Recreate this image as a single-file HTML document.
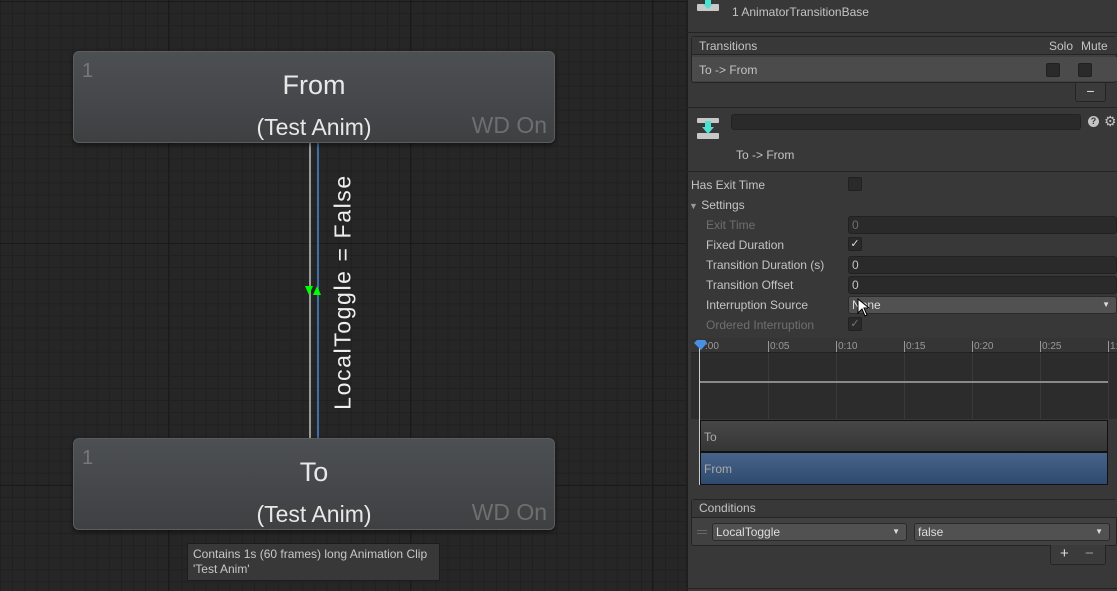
<!DOCTYPE html>
<html><head><style>
*{margin:0;padding:0;box-sizing:border-box}
body{width:1117px;height:591px;overflow:hidden;position:relative;font-family:"Liberation Sans",sans-serif;background:#383838}
.a{position:absolute}
#g{left:0;top:0;width:686px;height:591px;background-color:#262626;
background-image:linear-gradient(#1a1a1a 1px,transparent 1px),linear-gradient(90deg,#1a1a1a 1px,transparent 1px),linear-gradient(#202020 1px,transparent 1px),linear-gradient(90deg,#202020 1px,transparent 1px);
background-size:242px 242px,242px 242px,12.1px 12.1px,12.1px 12.1px;background-position:0 1px,168px 0,0 1px,0 0}
.node{left:73px;width:482px;height:92px;border-radius:6px;background:linear-gradient(#4d5053,#3e4042);border:1px solid #5a5c5e;box-shadow:0 2px 4px rgba(0,0,0,.5);color:#e8e8e8}
.node .n{position:absolute;left:8px;top:8px;font-size:20px;color:#777}
.node .t{position:absolute;left:0;width:100%;text-align:center;font-size:27px}
.node .s{position:absolute;left:0;width:100%;text-align:center;font-size:23px;top:62px}
.node .w{position:absolute;right:7px;top:60px;font-size:23px;color:#6e6e6e}
.lbl{color:#c4c4c4;font-size:12px}
.dis{color:#6f6f6f}
.fld{background:#2a2a2a;border:1px solid #212121;border-radius:3px;height:18px;color:#c4c4c4;font-size:12px;padding-left:3px;line-height:16px}
.cb{width:14px;height:14px;background:#2a2a2a;border:1px solid #212121;border-radius:2px;color:#ddd;font-size:11px;line-height:12px;text-align:center}
.sep{left:686px;width:431px;height:1px;background:#232323}
</style></head><body>
<div id="g" class="a"></div>
<div class="a" style="left:309px;top:140px;width:2px;height:300px;background:#9a9a9a"></div>
<div class="a" style="left:317px;top:140px;width:2px;height:300px;background:#3d6ea6"></div>
<svg class="a" style="left:303px;top:284px" width="22" height="14"><polygon points="2,2 10,2 6,11" fill="#0f0"/><polygon points="10,11 18,11 14,2" fill="#0f0"/></svg>
<div class="a" style="left:343px;top:292px;width:0;height:0"><div style="position:absolute;transform:translate(-50%,-50%) rotate(-90deg);white-space:nowrap;color:#eee;font-size:23px;letter-spacing:1.6px">LocalToggle = False</div></div>
<div class="a node" style="top:51px"><span class="n">1</span><div class="t" style="top:18px">From</div><div class="s">(Test Anim)</div><span class="w">WD On</span></div>
<div class="a node" style="top:438px"><span class="n">1</span><div class="t" style="top:18px">To</div><div class="s">(Test Anim)</div><span class="w">WD On</span></div>
<div class="a" style="left:187px;top:543px;width:253px;height:38px;background:#383838;border:1px solid #1d1d1d;color:#c8c8c8;font-size:12px;padding:3px 5px;line-height:15px">Contains 1s (60 frames) long Animation Clip<br>'Test Anim'</div>

<div class="a" style="left:686px;top:0;width:2px;height:591px;background:#1e1e1e"></div>
<svg class="a" style="left:697px;top:0" width="24" height="14"><rect x="0" y="4" width="22" height="7" rx="1" fill="#c8c8c8"/><rect x="8" y="0" width="6" height="5" fill="#4fe0d0"/><polygon points="6,4 16,4 11,9" fill="#4fe0d0"/></svg>
<div class="a lbl" style="left:732px;top:5px">1 AnimatorTransitionBase</div>
<div class="a sep" style="top:32px"></div>
<div class="a" style="left:691px;top:36px;width:426px;height:47px;border:1px solid #242424;border-radius:3px;background:#414141"></div>
<div class="a" style="left:692px;top:37px;width:425px;height:18px;background:#383838;border-bottom:1px solid #242424"></div>
<div class="a lbl" style="left:699px;top:39px">Transitions</div>
<div class="a lbl" style="left:1049px;top:39px">Solo</div>
<div class="a lbl" style="left:1081px;top:39px">Mute</div>
<div class="a" style="left:692px;top:57px;width:425px;height:24px;background:#4b4b4b"></div>
<div class="a lbl" style="left:699px;top:63px">To -&gt; From</div>
<div class="a cb" style="left:1046px;top:63px"></div>
<div class="a cb" style="left:1078px;top:63px"></div>
<div class="a" style="left:1075px;top:83px;width:31px;height:19px;border:1px solid #242424;border-top:none;border-radius:0 0 3px 3px;background:#3b3b3b;color:#ddd;font-size:14px;text-align:center;line-height:16px">−</div>
<div class="a sep" style="top:107px"></div>
<svg class="a" style="left:697px;top:118px" width="24" height="24"><rect x="0" y="0" width="22" height="5" rx="1" fill="#c8c8c8"/><rect x="0" y="15" width="22" height="6" rx="1" fill="#c8c8c8"/><rect x="8" y="3" width="6" height="7" fill="#4fe0d0"/><polygon points="5,9 17,9 11,16" fill="#4fe0d0"/></svg>
<div class="a" style="left:731px;top:114px;width:350px;height:16px;background:#2a2a2a;border:1px solid #222;border-radius:3px"></div>
<div class="a" style="left:1088px;top:116px;width:11px;height:11px;border-radius:50%;background:#c4c4c4;color:#383838;font-size:9px;font-weight:bold;text-align:center;line-height:11px">?</div>
<div class="a" style="left:1104px;top:113px;color:#c4c4c4;font-size:14px">⚙</div>
<div class="a lbl" style="left:736px;top:148px">To -&gt; From</div>
<div class="a sep" style="top:171px"></div>
<div class="a lbl" style="left:691px;top:178px">Has Exit Time</div>
<div class="a cb" style="left:848px;top:177px"></div>
<div class="a lbl" style="left:689px;top:198px"><span style="font-size:9px;color:#999">▼</span> Settings</div>
<div class="a lbl dis" style="left:706px;top:218px">Exit Time</div>
<div class="a fld" style="left:848px;top:216px;width:269px;color:#6f6f6f">0</div>
<div class="a lbl" style="left:706px;top:238px">Fixed Duration</div>
<div class="a cb" style="left:848px;top:237px">✓</div>
<div class="a lbl" style="left:706px;top:258px">Transition Duration (s)</div>
<div class="a fld" style="left:848px;top:256px;width:269px">0</div>
<div class="a lbl" style="left:706px;top:278px">Transition Offset</div>
<div class="a fld" style="left:848px;top:276px;width:269px">0</div>
<div class="a lbl" style="left:706px;top:298px">Interruption Source</div>
<div class="a fld" style="left:848px;top:296px;width:269px;background:#515151;border-color:#2a2a2a;color:#ddd">None<span style="position:absolute;right:6px;font-size:8px">▼</span></div>
<svg class="a" style="left:857px;top:298px" width="14" height="20"><polygon points="1,1 1,15 5,11 8,18 10,17 7,10 12,10" fill="#fff" stroke="#000" stroke-width="1"/></svg>
<div class="a lbl dis" style="left:706px;top:318px">Ordered Interruption</div>
<div class="a cb" style="left:848px;top:317px;color:#777">✓</div>

<div class="a" style="left:691px;top:338px;width:426px;height:147px;background:#2c2c2c"></div>
<div class="a" style="left:691px;top:338px;width:426px;height:15px;background:#353535;border-bottom:1px solid #222"></div>
<div class="a" style="left:691px;top:339px;width:426px;height:15px;font-size:10px;color:#999">
<span class="a" style="left:14px;top:2px">:00</span><span class="a" style="left:77px;top:2px;border-left:1px solid #999;padding-left:1px">0:05</span><span class="a" style="left:145px;top:2px;border-left:1px solid #999;padding-left:1px">0:10</span><span class="a" style="left:213px;top:2px;border-left:1px solid #999;padding-left:1px">0:15</span><span class="a" style="left:281px;top:2px;border-left:1px solid #999;padding-left:1px">0:20</span><span class="a" style="left:349px;top:2px;border-left:1px solid #999;padding-left:1px">0:25</span><span class="a" style="left:417px;top:2px;border-left:1px solid #999;padding-left:1px">1:</span></div>
<div class="a" style="left:768px;top:353px;width:1px;height:66px;background:#3a3a3a;box-shadow:68px 0 #3a3a3a,136px 0 #3a3a3a,204px 0 #3a3a3a,272px 0 #3a3a3a,340px 0 #3a3a3a"></div>
<div class="a" style="left:700px;top:381px;width:408px;height:2px;background:#8a8a8a"></div>
<div class="a" style="left:691px;top:419px;width:426px;height:66px;background:#383838"></div>
<div class="a" style="left:700px;top:420px;width:408px;height:32px;background:linear-gradient(#474747,#363636);border:1px solid #111"></div>
<div class="a" style="left:700px;top:452px;width:408px;height:33px;background:linear-gradient(#48638a,#2f4a6e);border:1px solid #111"></div>
<div class="a lbl" style="left:704px;top:430px;color:#aaa">To</div>
<div class="a lbl" style="left:704px;top:462px;color:#aaa">From</div>
<div class="a" style="left:699px;top:346px;width:1px;height:139px;background:#ccc"></div>
<svg class="a" style="left:693px;top:340px" width="16" height="12"><polygon points="1,3 4,0 12,0 14,3 8,10" fill="#4a90e2"/></svg>

<div class="a" style="left:691px;top:499px;width:426px;height:47px;border:1px solid #242424;border-radius:3px;background:#414141"></div>
<div class="a" style="left:692px;top:500px;width:425px;height:18px;background:#383838;border-bottom:1px solid #242424"></div>
<div class="a lbl" style="left:699px;top:501px">Conditions</div>
<div class="a" style="left:697px;top:530px;width:10px;height:4px;border-top:1px solid #666;border-bottom:1px solid #666"></div>
<div class="a fld" style="left:712px;top:523px;width:195px;background:#515151;border-color:#2a2a2a;color:#ddd">LocalToggle<span style="position:absolute;right:6px;font-size:8px">▼</span></div>
<div class="a fld" style="left:914px;top:523px;width:196px;background:#515151;border-color:#2a2a2a;color:#ddd">false<span style="position:absolute;right:6px;font-size:8px">▼</span></div>
<div class="a" style="left:1050px;top:545px;width:56px;height:20px;border:1px solid #242424;border-top:none;border-radius:0 0 3px 3px;background:#3b3b3b;color:#ddd;font-size:15px;line-height:17px"><span style="position:absolute;left:9px">+</span><span style="position:absolute;left:34px;color:#999">−</span></div>
<div class="a sep" style="top:588px"></div>
</body></html>
